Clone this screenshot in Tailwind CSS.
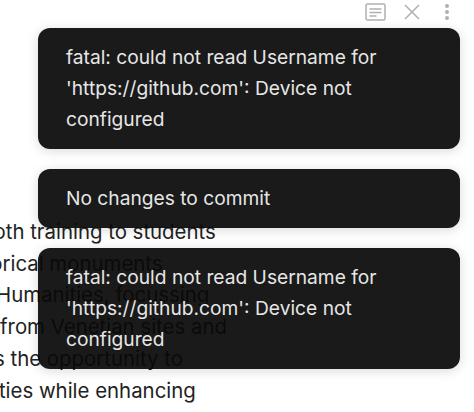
<!DOCTYPE html>
<html lang="en">

<head>
  <meta charset="UTF-8">
  <title>Git notices</title>
  <script src="https://cdn.jsdelivr.net/npm/@tailwindcss/browser@4"></script>
</head>

<body class="bg-white font-['Inter','Liberation_Sans',sans-serif] overflow-hidden">
  <div class="relative w-[474px] h-[412px] overflow-hidden">
    <!-- View header icons -->
    <div class="flex justify-end items-center h-[23px] pr-[24px]">
      <svg class="w-[21px] h-[18px] mr-[18px]" viewBox="0 0 21 18" fill="none" stroke="#b0b0b0" stroke-width="1.5">
        <rect x="1" y="1" width="19" height="16" rx="1.5" />
        <path d="M4.5 6h12M4.5 9.5h12M4.5 13h7" />
      </svg>
      <svg class="w-[16px] h-[16px] mr-[24px]" viewBox="0 0 16 16" fill="none" stroke="#b0b0b0" stroke-width="1.5">
        <path d="M1 1l14 14M15 1L1 15" />
      </svg>
      <svg class="w-[6px] h-[18px]" viewBox="0 0 6 18" fill="#b0b0b0">
        <circle cx="3" cy="3" r="2" />
        <circle cx="3" cy="9" r="2" />
        <circle cx="3" cy="15" r="2" />
      </svg>
    </div>

    <!-- Note text under the notices -->
    <div class="mt-[193px] text-[20.4px] leading-[31.7px] text-[#222] whitespace-nowrap">
      <p class="ml-[-19px]">both training to students</p>
      <p class="ml-[-44px]">historical monuments</p>
      <p class="ml-[-4px]">Humanities, focussing</p>
      <p class="ml-0">from Venetian sites and</p>
      <p class="ml-[-6px]">s the opportunity to</p>
      <p class="ml-[-6px]">ities while enhancing</p>
    </div>

    <!-- Notices -->
    <div class="absolute top-[28px] left-[38px] w-[422px] flex flex-col gap-[19.7px]">
      <div class="bg-[#090909]/93 rounded-[12px] pl-[28px] pr-[24px] py-[14.4px] text-[19.2px] leading-[30.72px] text-[#e6e6e6] shadow-[0_2px_12px_rgba(0,0,0,0.15)]">
        fatal: could not read Username for 'https://github.com': Device not configured
      </div>
      <div class="bg-[#090909]/93 rounded-[12px] pl-[28px] pr-[24px] py-[14.4px] text-[19.2px] leading-[30.72px] text-[#e6e6e6] shadow-[0_2px_12px_rgba(0,0,0,0.15)]">
        No changes to commit
      </div>
      <div class="bg-[#090909]/93 rounded-[12px] pl-[28px] pr-[24px] py-[14.4px] text-[19.2px] leading-[30.72px] text-[#e6e6e6] shadow-[0_2px_12px_rgba(0,0,0,0.15)]">
        fatal: could not read Username for 'https://github.com': Device not configured
      </div>
    </div>
  </div>
</body>

</html>
